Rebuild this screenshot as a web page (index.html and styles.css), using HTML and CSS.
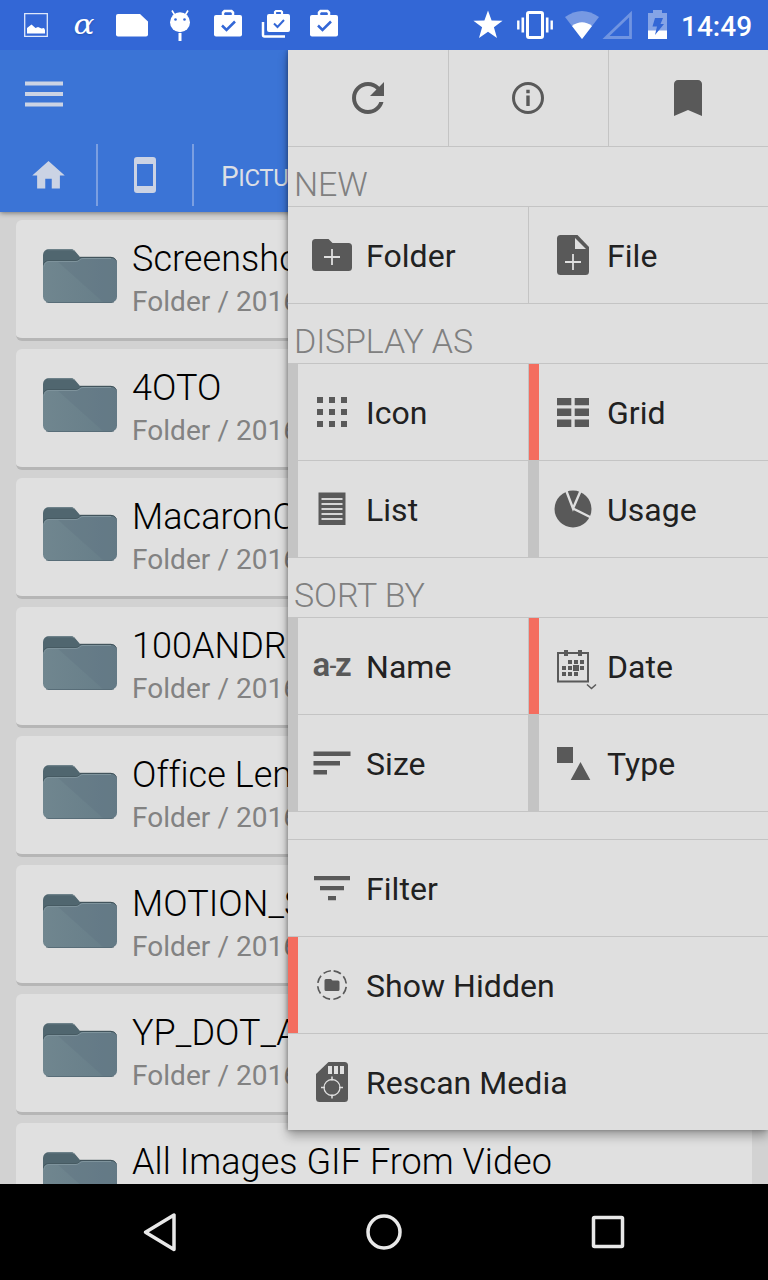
FILE: index.html
```
<!DOCTYPE html>
<html lang="en">
<head>
<meta charset="utf-8">
<title>File Explorer</title>
<link rel="stylesheet" href="styles.css">
</head>
<body>
<svg class="defs" width="0" height="0" aria-hidden="true">
  <defs>
    <linearGradient id="front" x1="0" y1="0" x2="1" y2="0"><stop offset="0" stop-color="#70868f"/><stop offset="1" stop-color="#667d88"/></linearGradient>
    <symbol id="folder" viewBox="0 0 74 54">
      <path d="M0 18V6a6 6 0 0 1 6-6h22q2 0 3.500 1.500L37 8h31a6 6 0 0 1 6 6v8H0z" fill="#50666f"/>
      <path d="M5 .7h23q2 0 3.500 1.500" stroke="#74888f" fill="none"/>
      <path d="M37 8.300h31q4 0 5.500 4" stroke="#3f5158" fill="none"/>
      <path d="M0 18a6 6 0 0 1 6-6h27q2 0 3.500-1.500Q38 9 40 9h28a6 6 0 0 1 6 6v32.500a6 6 0 0 1-6 6H6a6 6 0 0 1-6-6z" fill="url(#front)"/>
      <path d="M14 12h19q2 0 3.500-1.500Q38 9 40 9h28a6 6 0 0 1 6 6v32.500a6 6 0 0 1-6 6h-7.500z" fill="#5e7480" opacity=".35"/>
      <path d="M0 16.500a6 6 0 0 1 6-5h27q2 0 3.500-1.500" stroke="#465a62" fill="none"/>
      <path d="M1 17.500a5 5 0 0 1 5-5h27q2 0 3.500-1.500Q38 9.500 40 9.500h28" stroke="#7e939c" fill="none"/>
      <path d="M3 52.800Q4 53.500 6 53.500h62q2 0 3-.7" stroke="#586d78" fill="none"/>
    </symbol>
    <symbol id="bag" viewBox="0 0 48 50">
      <path d="M12 15h24q2 0 2 2v17.500q0 2-2 2H12q-2 0-2-2V17q0-2 2-2z" fill="#fff"/>
      <path d="M19 16v-3.500l1.500-1.500h7l1.500 1.500V16" fill="none" stroke="#fff" stroke-width="2.500"/>
      <path d="M18 25.500l4.500 4.500 8.500-8.500" fill="none" stroke="#3367d6" stroke-width="2.500"/>
    </symbol>
  </defs>
</svg>
<div class="phone">
  <header class="status">
    <div class="notes">
      <svg width="48" height="50"><path d="M12.700 13.700h22.600v22.600H12.700z" fill="none" stroke="#dfe8fa" stroke-width="1.300"/><path d="M15 33.500V28l4.500-3.500 4 3.500 2.500-1 3.500 1.500L32 28l1 2v3.500z" fill="#fff"/></svg>
      <span class="alpha">α</span>
      <svg width="48" height="50"><path d="M10 14h22l8 7.500V34.500q0 2-2 2H10q-2 0-2-2V16q0-2 2-2z" fill="#fff"/></svg>
      <svg width="48" height="50"><circle cx="24" cy="22.300" r="10" fill="#fff"/><path d="M16 10.500l3 5M32 10.500l-3 5" stroke="#fff" stroke-width="1.600"/><path d="M24 33v8" stroke="#fff" stroke-width="3"/><circle cx="19.500" cy="19.500" r="1.300" fill="#3367d6"/><circle cx="28.500" cy="19.500" r="1.300" fill="#3367d6"/></svg>
      <svg width="48" height="50"><use href="#bag"/></svg>
      <svg width="48" height="50"><path d="M17 14h19q2 0 2 2v14q0 2-2 2H17q-2 0-2-2V16q0-2 2-2z" fill="#fff"/><path d="M23 15v-3l1-1h5l1 1v3" fill="none" stroke="#fff" stroke-width="2.200"/><path d="M22 23.500l3.500 3.500 6.500-7" fill="none" stroke="#3367d6" stroke-width="2"/><path d="M11 22v13q0 1.500 1.500 1.500H33" fill="none" stroke="#fff" stroke-width="2.500"/></svg>
      <svg width="48" height="50"><use href="#bag"/></svg>
    </div>
    <div class="system">
      <svg width="210" height="50" viewBox="465 0 210 50">
        <path d="M488 10.500l3.600 10 11 .3-8.700 6.500 3.100 10.700-9-6.300-9 6.300 3.100-10.700-8.700-6.500 11-.3z" fill="#fff"/>
        <rect x="527.500" y="12.500" width="15" height="25" rx="1.500" fill="none" stroke="#fff" stroke-width="3"/>
        <path d="M522.800 17.500v15M547.200 17.500v15" stroke="#fff" stroke-width="2.600"/><path d="M518.300 20.500v9M551.700 20.500v9" stroke="#fff" stroke-width="2.400"/>
        <path d="M565 17Q582 5 599 17L582 39z" fill="#7799e3"/><path d="M572 26Q582 18.500 592 26L582 39z" fill="#fff"/>
        <path d="M606 37.500L630.500 14v23.500z" fill="none" stroke="#7094e1" stroke-width="2.800"/>
        <path d="M648 13h5v-3h9v3h5v26h-19z" fill="#85a4e6"/><path d="M648 30.500h19V39h-19z" fill="#fff"/><path d="M655 18h8l-2.500 6h3.500l-9 11 2-8.500h-4.500z" fill="#3367d6"/>
      </svg>
      <span class="time">14:49</span>
    </div>
  </header>
  <main class="app">
    <div class="appbar">
      <div class="toolbar"><svg width="38" height="26"><path d="M0 2.500h38M0 13h38M0 23.500h38" stroke="#cbd3e4" stroke-width="4.200"/></svg></div>
      <nav class="crumbs">
        <span class="crumb"><svg width="39" height="39" viewBox="0 0 24 24"><path d="M10 20v-6h4v6h5v-8h3L12 3 2 12h3v8z" fill="#cbd3e4"/></svg></span>
        <span class="crumb"><svg width="22" height="36"><path fill-rule="evenodd" d="M3 0h16a3 3 0 0 1 3 3v30a3 3 0 0 1-3 3H3a3 3 0 0 1-3-3V3a3 3 0 0 1 3-3zM3 7v22h16V7z" fill="#cbd3e4"/></svg></span>
        <span class="place">P<span class="small">ICTU</span></span>
      </nav>
    </div>
    <div class="list">
      <article class="card"><svg class="thumb"><use href="#folder"/></svg><div class="text"><h2>Screensho</h2><p>Folder / 2016</p></div></article>
      <article class="card"><svg class="thumb"><use href="#folder"/></svg><div class="text"><h2>4OTO</h2><p>Folder / 2016</p></div></article>
      <article class="card"><svg class="thumb"><use href="#folder"/></svg><div class="text"><h2>MacaronC</h2><p>Folder / 2016</p></div></article>
      <article class="card"><svg class="thumb"><use href="#folder"/></svg><div class="text"><h2>100ANDR</h2><p>Folder / 2016</p></div></article>
      <article class="card"><svg class="thumb"><use href="#folder"/></svg><div class="text"><h2>Office Len</h2><p>Folder / 2016</p></div></article>
      <article class="card"><svg class="thumb"><use href="#folder"/></svg><div class="text"><h2>MOTION_S</h2><p>Folder / 2016</p></div></article>
      <article class="card"><svg class="thumb"><use href="#folder"/></svg><div class="text"><h2>YP_DOT_A</h2><p>Folder / 2016</p></div></article>
      <article class="card"><svg class="thumb"><use href="#folder"/></svg><div class="text"><h2>All Images GIF From Video</h2></div></article>
    </div>
    <aside class="menu">
      <div class="actions">
        <span class="action"><svg width="48" height="48" viewBox="0 0 24 24"><path d="M17.650 6.350C16.200 4.900 14.210 4 12 4c-4.420 0-7.990 3.580-7.990 8s3.570 8 7.990 8c3.730 0 6.840-2.550 7.730-6h-2.080c-.82 2.330-3.040 4-5.650 4-3.310 0-6-2.690-6-6s2.690-6 6-6c1.660 0 3.140.69 4.220 1.780L13 11h7V4z"/></svg></span>
        <span class="action"><svg width="48" height="48"><circle cx="24" cy="24" r="14.500" class="line" stroke-width="3"/><path d="M22.300 15.800h3.400v3.400h-3.400zM22.300 21.500h3.400v10.500h-3.400z"/></svg></span>
        <span class="action"><svg width="48" height="48" viewBox="0 0 24 24"><path d="M17 3H7c-1.100 0-2 .9-2 2v16l7-3 7 3V5c0-1.100-.9-2-2-2z"/></svg></span>
      </div>
      <h3>NEW</h3>
      <div class="pair">
        <div class="item"><svg class="icon"><path d="M7.500 8h13l4 4h16q3.500 0 3.500 3.500v21q0 3.500-3.500 3.500h-33Q4 40 4 36.500v-25Q4 8 7.500 8z"/><path d="M16 26h16M24 18v16" stroke="#dfdfdf" stroke-width="1.800"/></svg>Folder</div>
        <div class="item"><svg class="icon"><path d="M11.500 4h17L40 16v24.500q0 3.500-3.500 3.500h-25Q8 44 8 40.500v-33Q8 4 11.500 4z"/><path d="M26 7v11h11z" fill="#dfdfdf"/><path d="M16 31h16M24 23v16" stroke="#dfdfdf" stroke-width="1.800"/></svg>File</div>
      </div>
      <h3>DISPLAY AS</h3>
      <div class="pair toggles">
        <div class="item"><svg class="icon"><path d="M9 9h6v6H9zM21 9h6v6h-6zM33 9h6v6h-6zM9 21h6v6H9zM21 21h6v6h-6zM33 21h6v6h-6zM9 33h6v6H9zM21 33h6v6h-6zM33 33h6v6h-6z"/></svg>Icon</div>
        <div class="item on"><svg class="icon"><path d="M8 10h14.300v7.300H8zM25.700 10H40v7.300H25.700zM8 20.500h14.300V28H8zM25.700 20.500H40V28H25.700zM8 31.500h14.300V39H8zM25.700 31.500H40V39H25.700z"/></svg>Grid</div>
        <div class="item"><svg class="icon"><path d="M10.500 7.500h27V40h-27z"/><path d="M13.500 14h21M13.500 19h21M13.500 24h21M13.500 29h21M13.500 34h21" stroke="#d5d5d5" stroke-width="2"/></svg>List</div>
        <div class="item"><svg class="icon"><circle cx="24" cy="24" r="18.500"/><path d="M17 5l7 18.500L32 5M24 23.500L43 33" fill="none" stroke="#dfdfdf" stroke-width="2.400"/></svg>Usage</div>
      </div>
      <h3>SORT BY</h3>
      <div class="pair toggles">
        <div class="item"><svg class="icon az"><text x="4.500" y="33.500">a<tspan x="21" font-size="22" dy="-2">-</tspan><tspan x="27" dy="2">z</tspan></text></svg>Name</div>
        <div class="item on"><svg class="icon"><path d="M9 11h30v28.500H9z" class="line" stroke-width="2"/><path d="M15 8h4v6h-4zM29 8h4v6h-4zM19 18h4v4h-4zM25 18h4v4h-4zM31 18h4v4h-4zM13 24h4v4h-4zM19 24h4v4h-4zM24 23h6v6h-6zM31 24h4v4h-4zM13 30h4v4h-4zM19 30h4v4h-4zM25 30h4v4h-4z"/><path d="M38 42.500l4.500 4 4.500-4" class="line" stroke-width="1.500"/></svg>Date</div>
        <div class="item"><svg class="icon"><path d="M5.500 12.500h37V17h-37zM5.500 22H32v4.500H5.500zM5.500 31H19v4.500H5.500z"/></svg>Size</div>
        <div class="item"><svg class="icon"><path d="M8 8h16v16H8zM31.500 23L41.300 41H21.700z"/></svg>Type</div>
      </div>
      <div class="gap"></div>
      <div class="item wide"><svg class="icon"><path d="M6 12h36v4.200H6zM12 22h24v4.200H12zM20 32h8v4.200h-8z"/></svg>Filter</div>
      <div class="item wide on"><svg class="icon"><circle cx="24" cy="24" r="14.300" class="line" stroke-width="1.700" stroke-dasharray="7.800 3.431" stroke-dashoffset="-1.700" transform="rotate(-90 24 24)"/><path d="M18 18h5l1.500 1.500H30q1.500 0 1.500 1.500v7.500q0 1.500-1.500 1.500H18q-1.500 0-1.500-1.500v-9Q16.500 18 18 18z"/></svg>Show Hidden</div>
      <div class="item wide"><svg class="icon"><path d="M20.500 4H36.500q3.500 0 3.500 3.500v33q0 3.500-3.500 3.500h-25Q8 44 8 40.500V16z"/><path d="M20 8h4v8h-4zM26 8h4v8h-4zM32 8h4v8h-4z" fill="#dfdfdf"/><circle cx="24" cy="29.500" r="8" fill="none" stroke="#dfdfdf" stroke-width="1.300"/><path d="M24 18.500v4M24 36.500v4M13 29.500h4M31 29.500h4" stroke="#dfdfdf" stroke-width="1.500"/></svg>Rescan Media</div>
    </aside>
  </main>
  <footer class="navbar">
    <svg width="48" height="48"><path d="M38 7v34.500L9.500 24.200z"/></svg>
    <svg width="48" height="48"><circle cx="24" cy="24" r="16"/></svg>
    <svg width="48" height="48"><rect x="9.500" y="9.500" width="29" height="29" rx="1"/></svg>
  </footer>
</div>
</body>
</html>
```
FILE: styles.css
```
* { box-sizing: border-box; }
body { margin: 0; font-family: Roboto, "Liberation Sans", sans-serif; }
svg { display: block; flex: none; }
h2, h3, p { margin: 0; }
.defs { position: absolute; }
.phone { width: 768px; height: 1280px; overflow: hidden; display: flex; flex-direction: column; }

.status { height: 50px; flex: none; background: #3367d6; color: #fff; display: flex; justify-content: space-between; padding: 0 17px 0 12px; }
.notes, .system { display: flex; align-items: center; }
.alpha { width: 48px; text-align: center; font: italic 400 27px/48px "DejaVu Serif", serif; transform: scaleX(1.15); text-shadow: 0 1px 2px #2450ae; }
.time { font-size: 28px; font-weight: 500; width: 70px; margin-left: 6px; white-space: nowrap; line-height: 46px; padding-top: 4px; }

.app { position: relative; flex: 1; min-height: 0; overflow: hidden; background: #d2d2d2; }
.appbar { position: relative; height: 162px; background: #3b74d6; box-shadow: 0 1px 5px rgba(0,0,0,.45); }
.toolbar { height: 94px; padding: 31px 25px 0; }
.crumbs { height: 68px; display: flex; padding-bottom: 6px; }
.crumb { width: 98px; border-right: 2px solid #7b9fe1; display: flex; align-items: center; justify-content: center; }
.crumb:first-child { padding-left: 1px; }
.crumb + .crumb { width: 96px; }
.place { color: #dcdfe5; font-size: 28px; line-height: 65px; padding-left: 27px; font-weight: 400; letter-spacing: -.4px; }
.small { font-size: 24px; }

.list { display: flex; flex-direction: column; gap: 8px; padding: 8px 16px; }
.card { height: 121px; flex: none; display: flex; border-radius: 6px; background: #e0e0e0; border-bottom: 3px solid #b6b6b6; padding: 18px 27px 0; gap: 15px; }
.thumb { width: 74px; height: 54px; margin-top: 11px; }
.text { white-space: nowrap; }
h2 { font-size: 36px; line-height: 42px; font-weight: 300; color: #000; letter-spacing: .05px; }
p { font-size: 28px; line-height: 42px; padding-top: 1px; color: #828282; letter-spacing: .05px; }

.menu { position: absolute; left: 288px; top: 0; width: 480px; height: 1080px; background: #dfdfdf; box-shadow: 0 6px 10px rgba(0,0,0,.3), -1px 0 4px rgba(0,0,0,.28); fill: #595959; color: #212121; }
.line { fill: none; stroke: #595959; }
.actions { height: 97px; display: grid; grid-template-columns: 160px 160px 160px; border-bottom: 1px solid #c4c4c4; }
.action { display: flex; align-items: center; justify-content: center; }
.action + .action { border-left: 1px solid #c4c4c4; padding-right: 1px; }
h3 { height: 60px; border-bottom: 1px solid #c4c4c4; padding: 17px 6px 0; font-size: 34px; line-height: 40px; font-weight: 300; color: #808080; letter-spacing: -.15px; }
.pair { display: grid; grid-template-columns: 240px 240px; }
.item { height: 97px; display: flex; align-items: center; gap: 10px; padding: 1px 0 0 20px; border-bottom: 1px solid #c4c4c4; font-size: 32px; white-space: nowrap; letter-spacing: .05px; }
.pair .item:nth-child(even) { border-left: 1px solid #c4c4c4; }
.icon { width: 48px; height: 48px; margin-bottom: 2px; }
.toggles .item { box-shadow: inset 10px 0 #c4c4c4; }
.toggles .on, .wide.on { box-shadow: inset 10px 0 #f46d5f; }
.az { font-size: 33px; font-weight: 600; letter-spacing: 0; }
.gap { height: 28px; border-bottom: 1px solid #c4c4c4; }
.wide:last-child { height: 96px; border-bottom: 0; }

.navbar { height: 96px; flex: none; background: #000; display: flex; justify-content: center; align-items: center; gap: 176px; }
.navbar svg { fill: none; stroke: #e8e8e8; stroke-width: 3.500; stroke-linejoin: round; }
```
